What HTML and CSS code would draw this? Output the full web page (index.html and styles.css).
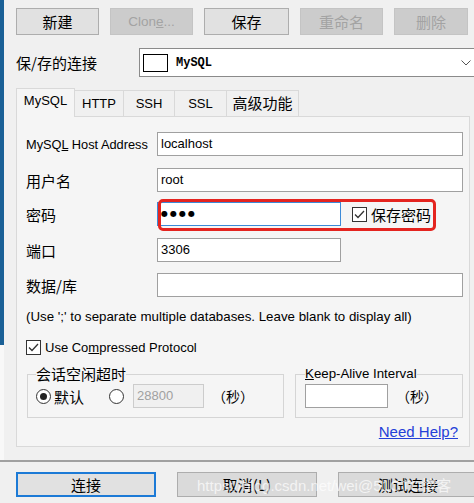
FILE: index.html
```html
<!DOCTYPE html>
<html lang="zh-CN">
<head>
    <meta charset="UTF-8">
    <meta name="viewport" content="width=device-width, initial-scale=1.0">
    <title>MySQL 连接</title>
    <link rel="stylesheet" href="styles.css">
</head>
<body>
    <div class="window">
        <div class="upper">
            <div class="strip"></div>
            <div class="main">
                <!-- connection toolbar -->
                <div class="toolbar">
                    <button class="btn w83">新建</button>
                    <button class="btn w83 disabled latin">Clon<u>e</u>...</button>
                    <button class="btn w85">保存</button>
                    <button class="btn w83 disabled">重命名</button>
                    <button class="btn w74 disabled">删除</button>
                </div>

                <div class="conn-row">
                    <span class="cn label-conn">保/存的连接</span>
                    <div class="select">
                        <span class="swatch"></span>
                        <span class="select-text">MySQL</span>
                        <svg class="chevron" width="10" height="6" viewBox="0 0 10 6"><path d="M0.5 0.5 L5 5 L9.5 0.5" fill="none" stroke="#555" stroke-width="1"/></svg>
                    </div>
                </div>

                <!-- tabs -->
                <div class="tabs">
                    <div class="tab active">MySQL</div>
                    <div class="tab t-http">HTTP</div>
                    <div class="tab t-ssh">SSH</div>
                    <div class="tab t-ssl">SSL</div>
                    <div class="tab t-adv">高级功能</div>
                </div>

                <div class="panel">
                    <div class="field">
                        <label class="host-label">MySQ<u>L</u> Host Address</label>
                        <div class="input">localhost</div>
                    </div>
                    <div class="field">
                        <label class="cn">用户名</label>
                        <div class="input">root</div>
                    </div>
                    <div class="field pw">
                        <label class="cn">密码</label>
                        <div class="input short focus"><span class="dots">●●●●</span></div>
                        <div class="check save-pw">
                            <svg width="15" height="15" viewBox="0 0 15 15"><rect x="0.5" y="0.5" width="14" height="14" fill="#fff" stroke="#333"/><path d="M3 7.5 L6 10.5 L12 4" fill="none" stroke="#333" stroke-width="1.3"/></svg>
                            <span class="cn">保存密码</span>
                        </div>
                        <div class="mark"></div>
                    </div>
                    <div class="field">
                        <label class="cn">端口</label>
                        <div class="input short">3306</div>
                    </div>
                    <div class="field last">
                        <label class="cn">数据/库</label>
                        <div class="input"></div>
                    </div>

                    <div class="hint">(Use ';' to separate multiple databases. Leave blank to display all)</div>

                    <div class="check compress">
                        <svg width="15" height="15" viewBox="0 0 15 15"><rect x="0.5" y="0.5" width="14" height="14" fill="#fff" stroke="#333"/><path d="M3 7.5 L6 10.5 L12 4" fill="none" stroke="#333" stroke-width="1.3"/></svg>
                        <span>Use Co<u>m</u>pressed Protocol</span>
                    </div>

                    <div class="groups">
                        <fieldset class="group g-timeout">
                            <legend class="cn">会话空闲超时</legend>
                            <div class="opt">
                                <svg width="15" height="15" viewBox="0 0 15 15"><circle cx="7.5" cy="7.5" r="7" fill="#fff" stroke="#333"/><circle cx="7.5" cy="7.5" r="3.5" fill="#222"/></svg>
                                <span class="cn opt-text">默认</span>
                                <svg class="radio2" width="15" height="15" viewBox="0 0 15 15"><circle cx="7.5" cy="7.5" r="7" fill="#fff" stroke="#333"/></svg>
                                <div class="input small disabled">28800</div>
                                <span class="cn unit">（秒）</span>
                            </div>
                        </fieldset>
                        <fieldset class="group g-keep">
                            <legend><u>K</u>eep-Alive Interval</legend>
                            <div class="opt">
                                <div class="input keep"></div>
                                <span class="cn unit">（秒）</span>
                            </div>
                        </fieldset>
                    </div>

                    <div class="help"><a href="#">Need Help?</a></div>
                </div>
            </div>
        </div>

        <div class="separator"></div>

        <div class="footer">
            <button class="btn wide primary">连接</button>
            <button class="btn wide">取消(L)</button>
            <button class="btn wide">测试连接</button>
        </div>

        <div class="watermark">https://blog.csdn.net/wei@51CTO博客</div>
    </div>
</body>
</html>
```

FILE: styles.css
```css
* {
    box-sizing: border-box;
}

body {
    margin: 0;
    background: #f0f0f0;
    font-family: "Liberation Sans", "Noto Sans CJK SC", sans-serif;
    font-size: 12px;
    color: #000;
}

.cn {
    font-family: "Noto Sans CJK SC", sans-serif;
    font-size: 15px;
}

.window {
    position: relative;
    width: 474px;
    height: 503px;
    overflow: hidden;
    display: flex;
    flex-direction: column;
}

.upper {
    display: flex;
    height: 460px;
    flex: none;
}

.strip {
    width: 4px;
    flex: none;
    background: linear-gradient(#1a6096 0, #1a6096 345px, #f8f8f8 345px);
}

.main {
    flex: 1;
    min-width: 0;
    padding: 8px 0 0 12px;
}

/* buttons */
.btn {
    height: 27px;
    padding: 0;
    border: 1px solid #adadad;
    background: #e1e1e1;
    color: #000;
    font-family: "Noto Sans CJK SC", sans-serif;
    font-size: 15px;
    line-height: 23px;
    flex: none;
}

.btn.latin {
    font-family: "Liberation Sans", sans-serif;
    font-size: 13.5px;
}

.btn.disabled {
    background: #cccccc;
    border-color: #c4c4c4;
    color: #a3a3a3;
}

.w83 { width: 83px; }
.w85 { width: 85px; }
.w74 { width: 74px; }

.toolbar {
    display: flex;
    gap: 11px;
}

.conn-row {
    display: flex;
    align-items: center;
    height: 29px;
    margin-top: 13px;
}

.label-conn {
    width: 123px;
    flex: none;
}

.select {
    flex: 1;
    height: 29px;
    margin-right: -6px;
    display: flex;
    align-items: center;
    padding: 0 8px 0 3px;
    background: #fff;
    border: 1px solid #8a8a8a;
}

.swatch {
    width: 25px;
    height: 18px;
    border: 1px solid #000;
    background: #fff;
    margin-right: 8px;
}

.select-text {
    font-family: "Liberation Mono", monospace;
    font-weight: bold;
    font-size: 12px;
}

.chevron {
    margin-left: auto;
}

/* tabs */
.tabs {
    position: relative;
    z-index: 1;
    display: flex;
    align-items: flex-end;
    height: 28px;
    margin-top: 11px;
}

.tab {
    height: 26px;
    border: 1px solid #d9d9d9;
    border-bottom: none;
    background: #f0f0f0;
    margin-left: -1px;
    text-align: center;
    line-height: 25px;
    font-size: 13px;
}

.tab.active {
    width: 59px;
    height: 29px;
    margin-left: 0;
    margin-bottom: -1px;
    background: #f5f5f5;
    line-height: 24px;
}

.t-http { width: 50px; }
.t-ssh { width: 52px; }
.t-ssl { width: 53px; }

.t-adv {
    width: 73px;
    font-family: "Noto Sans CJK SC", sans-serif;
    font-size: 15px;
    line-height: 24px;
}

.panel {
    height: 331px;
    margin-right: 4px;
    border: 1px solid #d9d9d9;
    background: #f5f5f5;
    padding: 15px 6px 0 9px;
}

.field {
    position: relative;
    display: flex;
    align-items: center;
    height: 24px;
    margin-top: 12px;
}

.field:first-child {
    margin-top: 0;
}

.field.pw {
    margin-top: 10px;
}

.field.last {
    margin-top: 11px;
}

.field label {
    width: 131px;
    flex: none;
}

.host-label {
    font-size: 12.8px;
}

.input {
    flex: 1;
    height: 24px;
    border: 1px solid #a0a0a0;
    background: #fff;
    padding-left: 3px;
    line-height: 22px;
    font-size: 13px;
}

.input.short {
    flex: none;
    width: 184px;
}

.input.focus {
    border-color: #3c8ad8;
}

.dots {
    font-family: "DejaVu Sans", sans-serif;
    font-size: 8px;
    letter-spacing: 2px;
    vertical-align: top;
}

.check {
    display: flex;
    align-items: center;
    gap: 4px;
}

.save-pw {
    margin-left: 11px;
}

/* red annotation drawn over the password row */
.mark {
    position: absolute;
    left: 132px;
    top: -3px;
    width: 278px;
    height: 32px;
    border: 3px solid #e4241f;
    border-radius: 5px;
    pointer-events: none;
}

.hint {
    margin-top: 11px;
    height: 18px;
    line-height: 18px;
    font-size: 13.3px;
    white-space: nowrap;
}

.compress {
    margin-top: 11px;
    height: 20px;
}

.compress span {
    font-size: 13px;
}

.groups {
    display: flex;
    gap: 11px;
    margin-top: 9px;
    padding-left: 1px;
}

.group {
    margin: 0;
    min-width: 0;
    padding: 0 8px 9px 8px;
    border: 1px solid #d5d5d5;
}

.group legend {
    padding: 0;
    line-height: 16px;
    font-size: 13.3px;
}

.group legend.cn {
    font-size: 15px;
}

.g-timeout {
    width: 257px;
}

.g-keep {
    width: 168px;
    padding-left: 9px;
}

.opt {
    display: flex;
    align-items: center;
    height: 24px;
    margin-top: 2px;
}

.opt-text {
    margin-left: 3px;
}

.radio2 {
    margin-left: 25px;
}

.input.small {
    flex: none;
    width: 71px;
    margin-left: 9px;
}

.input.disabled {
    background: #f0f0f0;
    border-color: #cccccc;
    color: #a0a0a0;
}

.input.keep {
    flex: none;
    width: 83px;
}

.unit {
    margin-left: 8px;
    font-size: 14px;
}

.help {
    margin-top: 5px;
    margin-right: 5px;
    text-align: right;
    line-height: 18px;
}

.help a {
    color: #2440d8;
    font-size: 15px;
}

.separator {
    height: 2px;
    background: #a0a0a0;
    flex: none;
}

.footer {
    display: flex;
    gap: 21px;
    padding: 10px 0 0 16px;
}

.btn.wide {
    width: 140px;
    height: 25px;
    background: #dadada;
    line-height: 22px;
}

.btn.primary {
    border: 2px solid #1c7ad6;
    background: #e1e1e1;
}

.watermark {
    position: absolute;
    left: 197px;
    top: 474px;
    font-size: 15px;
    color: rgba(255, 255, 255, 0.7);
    white-space: nowrap;
    pointer-events: none;
}
```
